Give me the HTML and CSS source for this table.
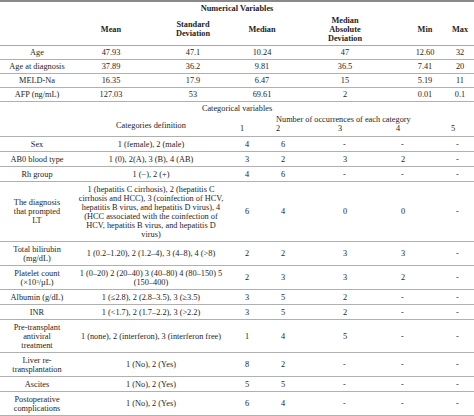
FILE: index.html
```html
<!DOCTYPE html>
<html>
<head>
<meta charset="utf-8">
<link rel="stylesheet" href="styles.css">
</head>
<body>
<div class="page">
<table class="tbl num">
  <colgroup>
    <col class="c-label"><col class="c-mean"><col class="c-sd"><col class="c-med"><col class="c-mad"><col class="c-min"><col class="c-max">
  </colgroup>
  <thead>
    <tr class="title-row"><th colspan="7">Numerical Variables</th></tr>
    <tr class="head-row">
      <th></th>
      <th>Mean</th>
      <th>Standard<br>Deviation</th>
      <th>Median</th>
      <th>Median<br>Absolute<br>Deviation</th>
      <th>Min</th>
      <th>Max</th>
    </tr>
  </thead>
  <tbody>
    <tr><td>Age</td><td>47.93</td><td>47.1</td><td>10.24</td><td>47</td><td>12.60</td><td>32</td></tr>
    <tr><td>Age at diagnosis</td><td>37.89</td><td>36.2</td><td>9.81</td><td>36.5</td><td>7.41</td><td>20</td></tr>
    <tr><td>MELD-Na</td><td>16.35</td><td>17.9</td><td>6.47</td><td>15</td><td>5.19</td><td>11</td></tr>
    <tr><td>AFP (ng/mL)</td><td>127.03</td><td>53</td><td>69.61</td><td>2</td><td>0.01</td><td>0.1</td></tr>
  </tbody>
</table>
<table class="tbl cat">
  <colgroup>
    <col class="k-label"><col class="k-def"><col class="k-1"><col class="k-2"><col class="k-3"><col class="k-4"><col class="k-5">
  </colgroup>
  <thead>
    <tr class="ctitle-row"><th colspan="7">Categorical variables</th></tr>
    <tr class="occ-row">
      <th rowspan="2"></th>
      <th rowspan="2" class="def-head">Categories definition</th>
      <th></th>
      <th colspan="4" class="num-left">Number of occurrences of each category</th>
    </tr>
    <tr class="idx-row">
      <th class="num-left">1</th><th class="num-left">2</th><th class="num-left">3</th><th class="num-left">4</th><th class="num-left">5</th>
    </tr>
  </thead>
  <tbody>
    <tr><td>Sex</td><td class="def">1 (female), 2 (male)</td><td>4</td><td>6</td><td>-</td><td>-</td><td>-</td></tr>
    <tr><td>AB0 blood type</td><td class="def">1 (0), 2(A), 3 (B), 4 (AB)</td><td>3</td><td>2</td><td>3</td><td>2</td><td>-</td></tr>
    <tr><td>Rh group</td><td class="def">1 (&minus;), 2 (+)</td><td>4</td><td>6</td><td>-</td><td>-</td><td>-</td></tr>
    <tr><td>The diagnosis that prompted LT</td><td class="def">1 (hepatitis C cirrhosis), 2 (hepatitis C cirrhosis and HCC), 3 (coinfection of HCV, hepatitis B virus, and hepatitis D virus), 4 (HCC associated with the coinfection of HCV, hepatitis B virus, and hepatitis D virus)</td><td>6</td><td>4</td><td>0</td><td>0</td><td>-</td></tr>
    <tr><td>Total bilirubin (mg/dL)</td><td class="def">1 (0.2&ndash;1.20), 2 (1.2&ndash;4), 3 (4&ndash;8), 4 (&gt;8)</td><td>2</td><td>2</td><td>3</td><td>3</td><td>-</td></tr>
    <tr><td>Platelet count (&times;10<sup>3</sup>/&micro;L)</td><td class="def">1 (0&ndash;20) 2 (20&ndash;40) 3 (40&ndash;80) 4 (80&ndash;150) 5 (150&ndash;400)</td><td>2</td><td>3</td><td>3</td><td>2</td><td>-</td></tr>
    <tr><td>Albumin (g/dL)</td><td class="def">1 (&le;2.8), 2 (2.8&ndash;3.5), 3 (&ge;3.5)</td><td>3</td><td>5</td><td>2</td><td>-</td><td>-</td></tr>
    <tr><td>INR</td><td class="def">1 (&lt;1.7), 2 (1.7&ndash;2.2), 3 (&gt;2.2)</td><td>3</td><td>5</td><td>2</td><td>-</td><td>-</td></tr>
    <tr><td>Pre-transplant antiviral treatment</td><td class="def">1 (none), 2 (interferon), 3 (interferon free)</td><td>1</td><td>4</td><td>5</td><td>-</td><td>-</td></tr>
    <tr><td>Liver re-transplantation</td><td class="def">1 (No), 2 (Yes)</td><td>8</td><td>2</td><td>-</td><td>-</td><td>-</td></tr>
    <tr><td>Ascites</td><td class="def">1 (No), 2 (Yes)</td><td>5</td><td>5</td><td>-</td><td>-</td><td>-</td></tr>
    <tr><td>Postoperative complications</td><td class="def">1 (No), 2 (Yes)</td><td>6</td><td>4</td><td>-</td><td>-</td><td>-</td></tr>
  </tbody>
</table>
</div>
</body>
</html>
```
FILE: styles.css
```css
html, body {
  margin: 0;
  padding: 0;
  background: #ffffff;
}
body {
  width: 474px;
  height: 416px;
  overflow: hidden;
}
.page {
  width: 474px;
  border-top: 2px solid #8a8a8a;
}
.tbl {
  width: 474px;
  border-collapse: collapse;
  table-layout: fixed;
  font-family: "Liberation Serif", "Times New Roman", serif;
  font-size: 8.3px;
  line-height: 9px;
  color: #1e1e1e;
}
.tbl th, .tbl td {
  padding: 0;
  vertical-align: middle;
  text-align: center;
}
.tbl sup {
  font-size: 5px;
  line-height: 0;
  vertical-align: 2.5px;
}

/* numerical table */
.c-label { width: 74px; }
.c-mean { width: 74px; }
.c-sd { width: 90px; }
.c-med { width: 48px; }
.c-mad { width: 118px; }
.c-min { width: 42px; }
.c-max { width: 28px; }

.num th { font-weight: bold; }
.num .title-row th {
  padding: 2px 0 0 0;
  height: 8px;
}
.num .head-row th {
  padding: 2.5px 0 2.5px 0;
  border-bottom: 1px solid #a8a8a8;
}
.num .head-row th:first-child { padding: 0 9px; }
.num tbody td {
  padding: 2px 0;
  border-bottom: 1px solid #b0b0b0;
}
.num tbody td:first-child { padding: 2px 9px; }

/* categorical table */
.k-label { width: 74px; }
.k-def { width: 166px; }
.k-1 { width: 36px; }
.k-2 { width: 62px; }
.k-3 { width: 58px; }
.k-4 { width: 55px; }
.k-5 { width: 23px; }

.cat th { font-weight: normal; }
.cat .ctitle-row th {
  padding: 2px 0 1px 0;
}
.cat .occ-row th {
  padding: 1px 0 0 0;
}
.cat .idx-row th {
  padding: 0 0 3px 0;
}
.cat thead .def-head {
  padding: 0 16px 0 4px;
  border-bottom: 1px solid #b0b0b0;
}
.cat .occ-row th:first-child,
.cat .idx-row th {
  border-bottom: 1px solid #b0b0b0;
}
.cat .num-left {
  text-align: left;
  padding-left: 5px;
}
.cat tbody td {
  padding: 2.5px 0 2.5px 5px;
  text-align: left;
  border-bottom: 1px solid #b0b0b0;
}
.cat tbody td:first-child {
  padding: 2.5px 9px;
  text-align: center;
}
.cat tbody td.def {
  padding: 2.5px 16px 2.5px 4px;
  text-align: center;
}
```
